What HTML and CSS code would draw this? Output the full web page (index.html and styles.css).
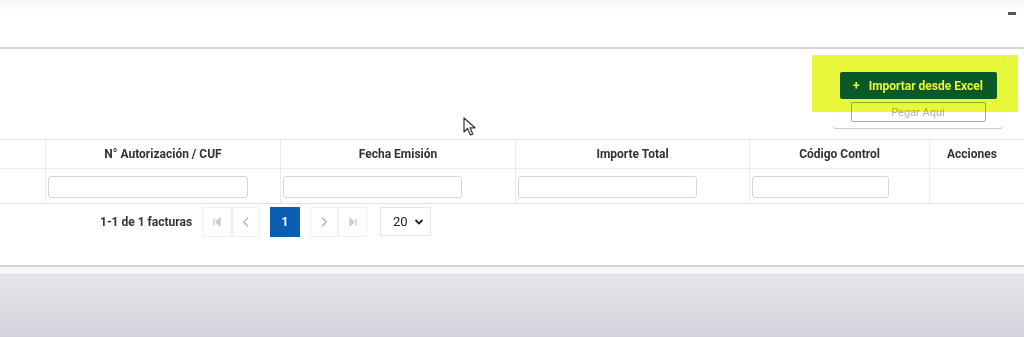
FILE: index.html
```html
<!DOCTYPE html>
<html lang="es">
<head>
    <meta charset="UTF-8">
    <meta name="viewport" content="width=device-width, initial-scale=1.0">
    <title>Facturas</title>
    <link rel="stylesheet" href="styles.css">
</head>
<body>
    <div class="topbar">
        <span class="minimize"></span>
    </div>

    <div class="toolbar">
        <div class="import-menu">
            <button type="button" class="import-button"><span class="plus">+</span> Importar desde Excel</button>
            <input type="text" class="paste-input" placeholder="Pegar Aqui">
        </div>
        <div class="highlight"></div>
        <svg class="cursor" width="14" height="20" viewBox="0 0 14 20">
            <path d="M1 1 L1 15 L4.5 11.5 L7.5 18 L9.8 17 L7 10.8 L12 10.8 Z" fill="#fff" stroke="#333" stroke-width="1.2" stroke-linejoin="round"/>
        </svg>
    </div>

    <table class="grid">
        <tr>
            <th class="col-blank"></th>
            <th class="col-cuf">N° Autorización / CUF</th>
            <th class="col-fecha">Fecha Emisión</th>
            <th class="col-importe">Importe Total</th>
            <th class="col-codigo">Código Control</th>
            <th class="col-acciones">Acciones</th>
        </tr>
        <tr class="filters">
            <td></td>
            <td><input type="text" class="filter f-cuf"></td>
            <td><input type="text" class="filter f-fecha"></td>
            <td><input type="text" class="filter f-importe"></td>
            <td><input type="text" class="filter f-codigo"></td>
            <td></td>
        </tr>
    </table>

    <div class="pager">
        <span class="count">1-1 de 1 facturas</span>
        <div class="pages">
            <button type="button" class="page-btn w30">
                <svg width="10" height="10" viewBox="0 0 10 10"><path d="M2 1.5 V8.5 M8 1.5 L4 5 L8 8.5 Z" fill="#ccc" stroke="#ccc" stroke-width="1.4"/></svg>
            </button>
            <button type="button" class="page-btn">
                <svg width="10" height="12" viewBox="0 0 10 12"><path d="M7 1.5 L2.8 6 L7 10.5" fill="none" stroke="#bbb" stroke-width="1.6"/></svg>
            </button>
            <button type="button" class="page-btn active">1</button>
            <button type="button" class="page-btn">
                <svg width="10" height="12" viewBox="0 0 10 12"><path d="M3 1.5 L7.2 6 L3 10.5" fill="none" stroke="#bbb" stroke-width="1.6"/></svg>
            </button>
            <button type="button" class="page-btn w29">
                <svg width="10" height="10" viewBox="0 0 10 10"><path d="M8 1.5 V8.5 M2 1.5 L6 5 L2 8.5 Z" fill="#ccc" stroke="#ccc" stroke-width="1.4"/></svg>
            </button>
        </div>
        <div class="per-page">
            <span>20</span>
            <svg width="10" height="8" viewBox="0 0 10 8"><path d="M1.5 2 L5 5.5 L8.5 2" fill="none" stroke="#222" stroke-width="1.8"/></svg>
        </div>
    </div>

    <div class="footer">
        <div class="footer-band"></div>
        <div class="footer-shade"></div>
    </div>
</body>
</html>
```

FILE: styles.css
```css
body {
    margin: 0;
    font-family: Roboto, "Liberation Sans", sans-serif;
    background: #fff;
    color: #333;
}
.topbar {
    height: 47px;
    border-bottom: 2px solid #d4d4d8;
    background: linear-gradient(#f7f7f7, #fff 12px);
    position: relative;
}
.minimize {
    position: absolute;
    top: 12px;
    right: 8px;
    width: 8px;
    height: 3px;
    background: #555;
}
.toolbar {
    height: 90px;
    position: relative;
}
.import-menu {
    position: absolute;
    left: 833px;
    top: 10px;
    width: 170px;
    height: 69px;
    background: #fff;
    border-radius: 3px;
    box-shadow: 0 1px 1px rgba(0, 0, 0, 0.22);
    display: flex;
    flex-direction: column;
    align-items: center;
}
.import-button {
    margin-top: 13px;
    width: 157px;
    height: 27px;
    background: #0b5cad;
    color: #fff;
    border: none;
    border-radius: 2px;
    font-family: Roboto, "Liberation Sans", sans-serif;
    font-weight: bold;
    font-size: 12px;
    padding: 0;
}
.plus {
    margin-right: 6px;
}
.paste-input {
    margin-top: 3px;
    width: 135px;
    height: 20px;
    box-sizing: border-box;
    border: 1px solid #aaa;
    border-radius: 2px;
    font-family: Roboto, "Liberation Sans", sans-serif;
    font-size: 11px;
    text-align: center;
    padding: 0;
}
.paste-input::placeholder {
    color: #b4b4b4;
}
.highlight {
    position: absolute;
    left: 812px;
    top: 6px;
    width: 206px;
    height: 57px;
    background: rgb(232, 247, 58);
    mix-blend-mode: multiply;
    pointer-events: none;
}
.cursor {
    position: absolute;
    left: 463px;
    top: 68px;
}
.grid {
    width: 1024px;
    border-collapse: collapse;
    table-layout: fixed;
}
.grid th {
    height: 28px;
    font-size: 12px;
    font-weight: bold;
    color: #333;
    text-align: center;
    border-top: 1px solid #e4e4e4;
    border-bottom: 1px solid #ececec;
    border-left: 1px solid #ececec;
    padding: 0;
}
.grid td {
    height: 34px;
    border-left: 1px solid #ececec;
    border-bottom: 1px solid #e2e2e2;
    padding: 0 0 0 2px;
}
.grid th:first-child, .grid td:first-child {
    border-left: none;
}
.col-blank { width: 45px; }
.col-cuf { width: 234px; }
.col-fecha { width: 234px; }
.col-importe { width: 233px; }
.col-codigo { width: 179px; }
.grid th.col-acciones {
    padding-right: 10px;
}
.filter {
    display: block;
    height: 22px;
    box-sizing: border-box;
    border: 1px solid #d6d6d6;
    border-radius: 3px;
    padding: 0 4px;
    margin-top: 1px;
}
.f-cuf { width: 200px; }
.f-fecha { width: 179px; }
.f-importe { width: 179px; }
.f-codigo { width: 137px; }
.pager {
    height: 61px;
    display: flex;
    align-items: flex-start;
    padding-left: 100px;
    padding-top: 3px;
    box-sizing: border-box;
}
.count {
    font-size: 12px;
    font-weight: bold;
    color: #333;
    line-height: 30px;
    width: 102px;
}
.pages {
    display: flex;
    align-items: center;
}
.page-btn {
    width: 28px;
    height: 30px;
    background: #fff;
    border: 1px solid #f0f0f0;
    padding: 0;
    display: flex;
    align-items: center;
    justify-content: center;
    font-family: Roboto, "Liberation Sans", sans-serif;
}
.page-btn.w30 { width: 30px; }
.page-btn.w29 { width: 29px; }
.page-btn.active {
    width: 30px;
    margin: 0 10px;
    background: #0a5db0;
    border-color: #0a5db0;
    color: #fff;
    font-weight: bold;
    font-size: 12px;
}
.per-page {
    margin-left: 13px;
    width: 51px;
    height: 29px;
    box-sizing: border-box;
    border: 1px solid #e6e6e6;
    display: flex;
    align-items: center;
    justify-content: space-between;
    padding: 0 6px 0 12px;
    font-size: 13px;
    color: #222;
}
.footer {
    border-top: 2px solid #d2d2d6;
}
.footer-band {
    height: 7px;
    background: #f7f7f8;
    border-bottom: 1px solid #dcdce2;
}
.footer-shade {
    height: 62px;
    background: linear-gradient(#e5e5e9, #d3d2dc);
}
```
